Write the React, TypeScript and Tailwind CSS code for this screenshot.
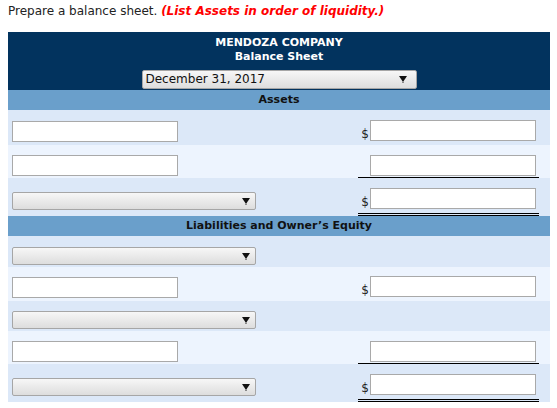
import React from "react";

function TextInput() {
  return <input type="text" className="block h-[21px] w-[166px] border border-[#a9a9a9] bg-white outline-none" />;
}

function Arrow() {
  return (
    <svg width="8" height="7" viewBox="0 0 8 7" className="block">
      <polygon points="0,0 8,0 4,6" fill="#111" />
      <rect x="3" y="6" width="2" height="1" fill="#888" />
    </svg>
  );
}

function Sel({ children, wide }: { children?: React.ReactNode; wide?: boolean }) {
  return (
    <div
      className={
        wide
          ? "flex h-[19px] w-[275px] items-center justify-between rounded-[2px] border border-[#a6a6a6] bg-gradient-to-b from-[#f7f7f7] to-[#dddddd] pl-[3px] pr-[9px]"
          : "flex h-[18px] w-[244px] items-center justify-end rounded-[2px] border border-[#a6a6a6] bg-gradient-to-b from-[#f7f7f7] to-[#dddddd] pr-[5px]"
      }
    >
      {children}
      <Arrow />
    </div>
  );
}

function Dollar() {
  return <span className="mb-[1px] mr-[1px] text-[12px] leading-[12px] text-[#222]">$</span>;
}

export default function App() {
  return (
    <div className="h-[408px] w-[557px] bg-white font-['DejaVu_Sans',sans-serif] text-[#222]">
      <p className="h-[32px] px-2 pt-[3px] text-[12px] leading-[16px]">
        Prepare a balance sheet.{" "}
        <span className="font-bold italic text-[#ff0000]">(List Assets in order of liquidity.)</span>
      </p>
      <div className="mx-2 w-[542px]">
        <div className="flex h-[58px] flex-col items-center bg-[#02335e] pt-[4px] text-[11px] font-bold leading-[14px] text-white">
          <div>MENDOZA COMPANY</div>
          <div>Balance Sheet</div>
          <div className="mt-[6px]">
            <Sel wide>
              <span className="text-[12px] font-normal leading-[15px] text-[#111]">December 31, 2017</span>
            </Sel>
          </div>
        </div>
        <div className="h-[20px] bg-[#6a9fcb] text-center text-[11px] font-bold leading-[20px] text-[#111]">Assets</div>

        <div className="flex h-[35px] items-end justify-between bg-[#dce8f8] pl-[4px] pr-[11px]">
          <div className="pb-[3px]"><TextInput /></div>
          <div className="mb-[4px] flex w-[181px] items-end justify-end pr-[3px]"><Dollar /><TextInput /></div>
        </div>
        <div className="flex h-[33px] items-end justify-between bg-[#edf4fe] pl-[4px] pr-[11px]">
          <div className="pb-[2px]"><TextInput /></div>
          <div className="flex w-[181px] items-end justify-end border-b border-black pb-[1px] pr-[3px]"><TextInput /></div>
        </div>
        <div className="flex h-[38px] items-end justify-between bg-[#dce8f8] pl-[4px] pr-[11px]">
          <div className="pb-[6px]"><Sel /></div>
          <div className="flex w-[181px] items-end justify-end border-b-[3px] border-double border-black pb-[4px] pr-[3px]"><Dollar /><TextInput /></div>
        </div>

        <div className="h-[20px] bg-[#6a9fcb] text-center text-[11px] font-bold leading-[20px] text-[#111]">Liabilities and Owner’s Equity</div>

        <div className="flex h-[31px] items-end bg-[#dce8f8] pl-[4px] pr-[11px]">
          <div className="pb-[2px]"><Sel /></div>
        </div>
        <div className="flex h-[34px] items-end justify-between bg-[#edf4fe] pl-[4px] pr-[11px]">
          <div className="pb-[3px]"><TextInput /></div>
          <div className="mb-[4px] flex w-[181px] items-end justify-end pr-[3px]"><Dollar /><TextInput /></div>
        </div>
        <div className="flex h-[30px] items-end bg-[#dce8f8] pl-[4px] pr-[11px]">
          <div className="pb-[2px]"><Sel /></div>
        </div>
        <div className="flex h-[33px] items-end justify-between bg-[#edf4fe] pl-[4px] pr-[11px]">
          <div className="pb-[2px]"><TextInput /></div>
          <div className="flex w-[181px] items-end justify-end border-b border-black pb-[1px] pr-[3px]"><TextInput /></div>
        </div>
        <div className="flex h-[38px] items-end justify-between bg-[#dce8f8] pl-[4px] pr-[11px]">
          <div className="pb-[6px]"><Sel /></div>
          <div className="flex w-[181px] items-end justify-end border-b-[3px] border-double border-black pb-[4px] pr-[3px]"><Dollar /><TextInput /></div>
        </div>
      </div>
    </div>
  );
}
